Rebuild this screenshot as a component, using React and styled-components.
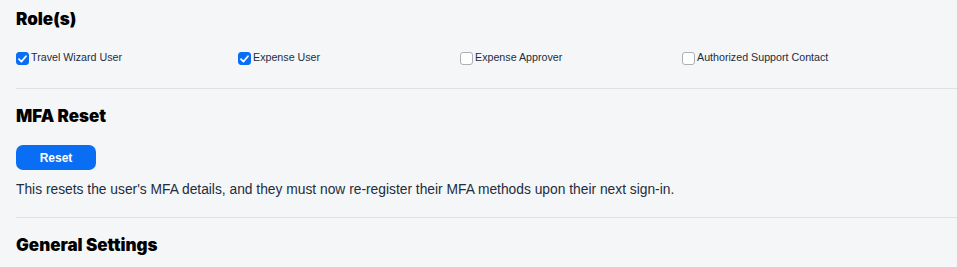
import React from "react";
import styled, { createGlobalStyle } from "styled-components";

const GlobalStyle = createGlobalStyle`
  html, body {
    margin: 0;
    padding: 0;
    background: #f5f6f7;
  }
  body {
    font-family: "Liberation Sans", Arial, sans-serif;
    color: #1d2d3e;
  }
`;

const Page = styled.div`
  padding: 0 0 0 16px;
  width: 941px;
`;

const Section = styled.section`
  border-bottom: ${props => (props.last ? "none" : "1px solid #dfe1e4")};
  padding: ${props => props.pad};
`;

const Title = styled.h2`
  margin: 0;
  font-family: Inter, Lato, "Liberation Sans", sans-serif;
  font-weight: 900;
  font-size: 17px;
  line-height: 20px;
  color: #000;
  letter-spacing: 0;
`;

const RoleGrid = styled.div`
  display: grid;
  grid-template-columns: repeat(4, 222px);
  margin-top: 20px;
`;

const RoleItem = styled.label`
  display: flex;
  align-items: center;
  gap: 2px;
  font-size: 10.7px;
  line-height: 14px;
  color: #1d2d3e;
`;

const Box = styled.span`
  width: 13px;
  height: 13px;
  box-sizing: border-box;
  border-radius: 3px;
  display: inline-flex;
  align-items: center;
  justify-content: center;
  margin-top: 3px;
  background: ${props => (props.checked ? "#0a6ef5" : "#fff")};
  border: 1px solid ${props => (props.checked ? "#0a6ef5" : "#a9b0b8")};
`;

const ResetButton = styled.button`
  display: block;
  width: 80px;
  height: 25px;
  margin-top: 19px;
  border: none;
  border-radius: 7px;
  background: #0a6ef5;
  color: #fff;
  font-family: "Liberation Sans", Arial, sans-serif;
  font-weight: 700;
  font-size: 12px;
  padding: 0;
`;

const Note = styled.p`
  margin: 12px 0 0;
  font-size: 13.8px;
  line-height: 16px;
  color: #1d2d3e;
`;

const roles = [
  { name: "Travel Wizard User", checked: true },
  { name: "Expense User", checked: true },
  { name: "Expense Approver", checked: false },
  { name: "Authorized Support Contact", checked: false },
];

const Check = () => (
  <svg width="9" height="8" viewBox="0 0 9 8">
    <path d="M1 4.2 L3.4 6.6 L8 1.2" fill="none" stroke="#fff" strokeWidth="1.7" strokeLinecap="round" strokeLinejoin="round" />
  </svg>
);

const App = () => (
  <>
    <GlobalStyle />
    <Page>
      <Section pad="9px 0 23px">
        <Title>Role(s)</Title>
        <RoleGrid>
          {roles.map(r => (
            <RoleItem key={r.name}>
              <Box checked={r.checked}>{r.checked && <Check />}</Box>
              {r.name}
            </RoleItem>
          ))}
        </RoleGrid>
      </Section>
      <Section pad="17px 0 19px">
        <Title>MFA Reset</Title>
        <ResetButton>Reset</ResetButton>
        <Note>
          This resets the user's MFA details, and they must now re-register their MFA methods upon their next sign-in.
        </Note>
      </Section>
      <Section last pad="17px 0 0">
        <Title>General Settings</Title>
      </Section>
    </Page>
  </>
);

export default App;
